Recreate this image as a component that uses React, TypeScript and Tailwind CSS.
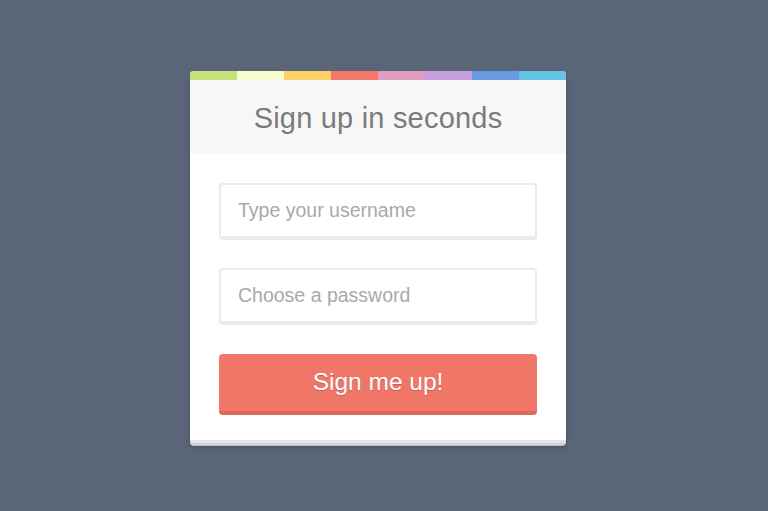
import React from "react";

const stripes = [
  "bg-[#c5e17a]",
  "bg-[#f6fccd]",
  "bg-[#fdd068]",
  "bg-[#f2786b]",
  "bg-[#e09dbf]",
  "bg-[#c59fe0]",
  "bg-[#6a9ae0]",
  "bg-[#65c4e4]",
];

export default function App() {
  return (
    <div
      className="min-h-[511px] w-full bg-[#5a6678] flex justify-center pt-[71px] pr-[12px]"
      style={{ fontFamily: '"Liberation Sans", Arial, sans-serif' }}
    >
      <div className="w-[376px] h-[372px] rounded-[4px] overflow-hidden bg-white flex flex-col shadow-[0_2px_0_#d0d2d6,0_3px_0_#bfc3ca,0_4px_4px_rgba(0,0,0,0.25)] border-b-[3px] border-[#e6e6e6]">
        <div className="flex h-[9px] shrink-0">
          {stripes.map((c, i) => (
            <div key={i} className={`flex-1 ${c}`} />
          ))}
        </div>
        <div className="h-[74px] shrink-0 bg-[#f7f7f7] flex items-center justify-center pt-[4px]">
          <h1 className="text-[29px] text-[#7b7b7b] font-normal tracking-[0.2px]">
            Sign up in seconds
          </h1>
        </div>
        <div className="px-[29px] pt-[29px] flex flex-col">
          <input
            className="h-[57px] w-full border-2 border-b-[4px] border-[#ebebeb] rounded-[4px] px-[17px] text-[19.5px] text-[#555] placeholder:text-[#a9a9a9] outline-none"
            placeholder="Type your username"
          />
          <input
            type="password"
            className="mt-[28px] h-[57px] w-full border-2 border-b-[4px] border-[#ebebeb] rounded-[4px] px-[17px] text-[19.5px] text-[#555] placeholder:text-[#a9a9a9] outline-none"
            placeholder="Choose a password"
          />
          <button className="mt-[29px] h-[61px] w-full rounded-[4px] bg-[#f07768] border-b-[4px] border-[#d96a5d] text-white text-[24.5px] [text-shadow:0_1px_1px_rgba(0,0,0,0.2)]">
            Sign me up!
          </button>
        </div>
      </div>
    </div>
  );
}
